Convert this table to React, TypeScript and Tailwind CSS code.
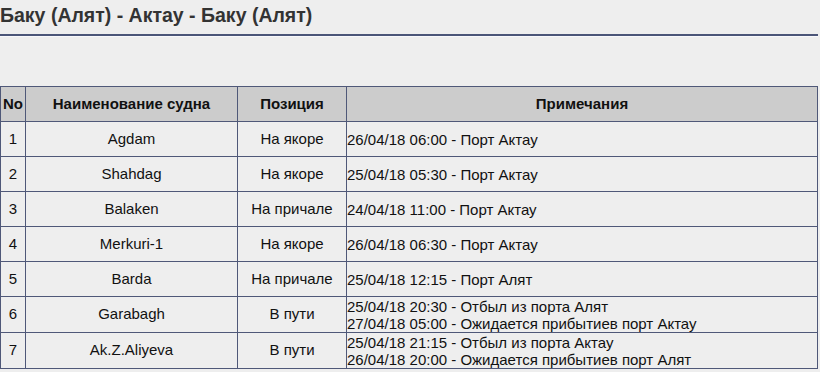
import React from "react";

type Row = {
  no: number;
  name: string;
  pos: string;
  notes: string[];
};

const rows: Row[] = [
  { no: 1, name: "Agdam", pos: "На якоре", notes: ["26/04/18 06:00 - Порт Актау"] },
  { no: 2, name: "Shahdag", pos: "На якоре", notes: ["25/04/18 05:30 - Порт Актау"] },
  { no: 3, name: "Balaken", pos: "На причале", notes: ["24/04/18 11:00 - Порт Актау"] },
  { no: 4, name: "Merkuri-1", pos: "На якоре", notes: ["26/04/18 06:30 - Порт Актау"] },
  { no: 5, name: "Barda", pos: "На причале", notes: ["25/04/18 12:15 - Порт Алят"] },
  {
    no: 6,
    name: "Garabagh",
    pos: "В пути",
    notes: ["25/04/18 20:30 - Отбыл из порта Алят", "27/04/18 05:00 - Ожидается прибытиев порт Актау"],
  },
  {
    no: 7,
    name: "Ak.Z.Aliyeva",
    pos: "В пути",
    notes: ["25/04/18 21:15 - Отбыл из порта Актау", "26/04/18 20:00 - Ожидается прибытиев порт Алят"],
  },
];

const cell = "border border-[#4f5878] p-0 align-middle";

const App = () => {
  return (
    <div className="min-h-[372px] w-[820px] bg-[#eeeeee] font-['Liberation_Sans',Arial,sans-serif] text-[15px] text-[#111] overflow-hidden">
      <div className="h-[36px] w-[818px] border-b-2 border-[#4b5578] flex items-center pb-[3px]">
        <h2 className="text-[19.5px] font-bold text-[#333] leading-none">Баку (Алят) - Актау - Баку (Алят)</h2>
      </div>
      <div className="h-[50px] w-[818px] border-t border-[#f8f8fb]" />
      <table className="table-fixed border-collapse w-[818px]">
        <colgroup>
          <col className="w-[25px]" />
          <col className="w-[212px]" />
          <col className="w-[109px]" />
          <col />
        </colgroup>
        <thead>
          <tr className="bg-[#cccccc] h-[35px]">
            <th className={`${cell} text-center font-bold`}>No</th>
            <th className={`${cell} text-center font-bold`}>Наименование судна</th>
            <th className={`${cell} text-center font-bold`}>Позиция</th>
            <th className={`${cell} text-center font-bold`}>Примечания</th>
          </tr>
        </thead>
        <tbody>
          {rows.map((r) => (
            <tr key={r.no} className={r.notes.length > 1 ? "h-[36px]" : "h-[35px]"}>
              <td className={`${cell} text-center`}>{r.no}</td>
              <td className={`${cell} text-center`}>{r.name}</td>
              <td className={`${cell} text-center`}>{r.pos}</td>
              <td className={`${cell} text-left leading-[17px]`}>
                {r.notes.map((n) => (
                  <div key={n}>{n}</div>
                ))}
              </td>
            </tr>
          ))}
        </tbody>
      </table>
    </div>
  );
};

export default App;
